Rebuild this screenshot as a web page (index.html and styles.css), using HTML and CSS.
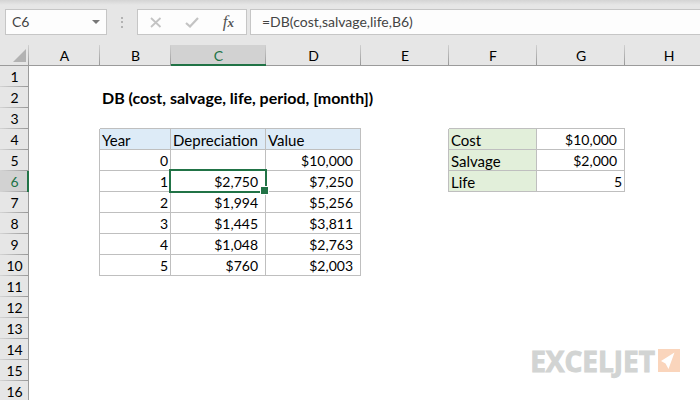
FILE: index.html
```html
<!DOCTYPE html>
<html lang="en">
<head>
<meta charset="utf-8">
<title>DB function</title>
<link rel="stylesheet" href="styles.css">
</head>
<body>
<header class="bar">
  <div class="box name-box">
    <input class="name-input" type="text" value="C6" aria-label="Name box">
    <button class="drop" type="button" aria-label="Show names"><svg width="8" height="4" viewBox="0 0 8 4"><path d="M0 0h8L4 4z" fill="#777"/></svg></button>
  </div>
  <svg class="grip" width="2" height="11" viewBox="0 0 2 11" fill="#b2b2b2"><path d="M0 0h2v2H0zM0 4h2v2H0zM0 9h2v2H0z"/></svg>
  <div class="box tools">
    <button type="button" aria-label="Cancel"><svg width="12" height="11" viewBox="0 0 12 11"><path d="M1 1l9.500 9M10.500 1L1 10" fill="none" stroke="#c3c3c3" stroke-width="1.800"/></svg></button>
    <button type="button" aria-label="Enter"><svg width="14" height="11" viewBox="0 0 14 11"><path d="M1 6l4 3.500L13 1" fill="none" stroke="#c3c3c3" stroke-width="2.200"/></svg></button>
    <button class="fx" type="button" aria-label="Insert function">f<span>x</span></button>
  </div>
  <div class="box formula"><input class="formula-input" type="text" value="=DB(cost,salvage,life,B6)" aria-label="Formula"></div>
</header>
<main class="sheet">
<table class="grid">
  <colgroup><col class="c-row"><col class="c-ab"><col class="c-ab"><col class="c-cd"><col class="c-cd"><col class="c-eg"><col class="c-eg"><col class="c-eg"><col></colgroup>
  <thead>
    <tr><th class="corner"><svg width="13" height="13" viewBox="0 0 13 13"><path d="M13 0v13H0z" fill="#b2b2b2"/></svg></th><th>A</th><th>B</th><th class="on">C</th><th>D</th><th>E</th><th>F</th><th>G</th><th>H</th></tr>
  </thead>
  <tbody>
    <tr><th>1</th><td></td><td></td><td></td><td></td><td></td><td></td><td></td><td></td></tr>
    <tr><th>2</th><td></td><td class="title" colspan="4">DB (cost, salvage, life, period, [month])</td><td></td><td></td><td></td></tr>
    <tr><th>3</th><td></td><td class="b"></td><td class="b"></td><td class="b"></td><td></td><td class="b"></td><td class="b"></td><td></td></tr>
    <tr><th>4</th><td class="r"></td><td class="b r blue">Year</td><td class="b r blue">Depreciation</td><td class="b r blue">Value</td><td class="r"></td><td class="b r green">Cost</td><td class="b r money">$10,000</td><td></td></tr>
    <tr><th>5</th><td class="r"></td><td class="b r num">0</td><td class="b r"></td><td class="b r money">$10,000</td><td class="r"></td><td class="b r green">Salvage</td><td class="b r money">$2,000</td><td></td></tr>
    <tr><th class="on">6</th><td class="r"></td><td class="b r num">1</td><td class="b r money active">$2,750</td><td class="b r money">$7,250</td><td class="r"></td><td class="b r green">Life</td><td class="b r num">5</td><td></td></tr>
    <tr><th>7</th><td class="r"></td><td class="b r num">2</td><td class="b r money">$1,994</td><td class="b r money">$5,256</td><td></td><td></td><td></td><td></td></tr>
    <tr><th>8</th><td class="r"></td><td class="b r num">3</td><td class="b r money">$1,445</td><td class="b r money">$3,811</td><td></td><td></td><td></td><td></td></tr>
    <tr><th>9</th><td class="r"></td><td class="b r num">4</td><td class="b r money">$1,048</td><td class="b r money">$2,763</td><td></td><td></td><td></td><td></td></tr>
    <tr><th>10</th><td class="r"></td><td class="b r num">5</td><td class="b r money">$760</td><td class="b r money">$2,003</td><td></td><td></td><td></td><td></td></tr>
    <tr><th>11</th><td colspan="8"></td></tr>
    <tr><th>12</th><td colspan="8"></td></tr>
    <tr><th>13</th><td colspan="8"></td></tr>
    <tr><th>14</th><td colspan="8"></td></tr>
    <tr><th>15</th><td colspan="8"></td></tr>
    <tr><th>16</th><td colspan="8"></td></tr>
  </tbody>
</table>
</main>
<div class="logo"><span>EXCELJET</span><svg class="mark" width="22" height="23" viewBox="0 0 22 23"><path d="M0 0h22v23H0z" fill="#fad5bc"/><path d="M16.500 3.500L3 12l4.500 2.500L10.500 20z" fill="#fff"/></svg></div>
</body>
</html>
```
FILE: styles.css
```css
* { box-sizing: border-box; }
body {
  margin: 0;
  height: 100vh;
  overflow: hidden;
  background: #fff;
  color: #000;
  font: 14px/20px Lato, Carlito, sans-serif;
}
button, input {
  margin: 0;
  padding: 0;
  border: 0;
  background: none;
  color: #444;
  font: inherit;
}
svg { display: block; }

.bar {
  display: flex;
  align-items: center;
  height: 45px;
  padding: 0 0 1px 5px;
  background: linear-gradient(#d4d4d4, #e6e6e6 5px);
}
.box {
  display: flex;
  align-items: center;
  height: 26px;
  border: 1px solid #c6c6c6;
  background: #fdfdfd;
}
.name-box { width: 102px; padding: 0 6px; }
.name-input { flex: 1; min-width: 0; }
.grip { margin: 0 14px; }
.tools { width: 110px; padding: 0 12px; justify-content: space-between; }
.fx {
  color: #555;
  font: italic 17px/20px "Liberation Serif", serif;
}
.fx span { font-size: 13px; font-weight: 700; }
.formula { flex: 1; margin-left: 3px; padding-left: 11px; border-right: 0; }
.formula-input { width: 100%; }

.grid {
  width: 100%;
  min-width: 713px;
  table-layout: fixed;
  border-collapse: separate;
  border-spacing: 0;
}
.c-row { width: 29px; }
.c-ab { width: 71px; }
.c-cd { width: 95px; }
.c-eg { width: 88px; }
.grid th, .grid td {
  height: 21px;
  padding: 0 2px;
  border: 0 solid #bfbfbf;
  line-height: 20px;
  white-space: nowrap;
  text-align: left;
}
.grid th {
  padding: 0;
  font-weight: 400;
  text-align: center;
}
thead th {
  background: linear-gradient(#d0d0d0, #969696) right / 1px 100% no-repeat #e6e6e6;
  box-shadow: inset 0 -1px #9b9b9b;
}
thead .on {
  background-color: #d2d2d2;
  box-shadow: inset 0 -2px #217346;
  color: #217346;
}
.corner svg { margin: 0 3px 0 auto; }
tbody th {
  background: linear-gradient(90deg, #d4d4d4, #969696) bottom / 100% 1px no-repeat #e6e6e6;
  box-shadow: inset -1px 0 #9b9b9b;
}
tbody .on {
  background-color: #d2d2d2;
  box-shadow: inset -2px 0 #217346;
  color: #217346;
}
.grid .b { padding-top: 2px; border-bottom-width: 1px; line-height: 18px; }
.grid .r { border-right-width: 1px; }
.grid .num { text-align: right; }
.grid .money { padding-right: 7px; text-align: right; }
.blue, .green { font-size: 15px; }
.blue { background: #ddebf7; }
.green { background: #e2efda; }
.title { font-size: 16px; font-weight: 700; }
.active { position: relative; }
.active::before {
  content: "";
  position: absolute;
  inset: -2px;
  border: 2px solid #217346;
}
.active::after {
  content: "";
  position: absolute;
  right: -4px;
  bottom: -4px;
  width: 7px;
  height: 7px;
  border: 1px solid #fff;
  background: #217346;
}

.logo {
  position: absolute;
  right: 20px;
  bottom: 18px;
  display: flex;
  height: 34px;
  color: #d2d4d3;
  font: 700 28px/26px "Open Sans", sans-serif;
  -webkit-text-stroke: 1px #d2d4d3;
}
.mark { margin: 1px 0 0 3px; }
```
